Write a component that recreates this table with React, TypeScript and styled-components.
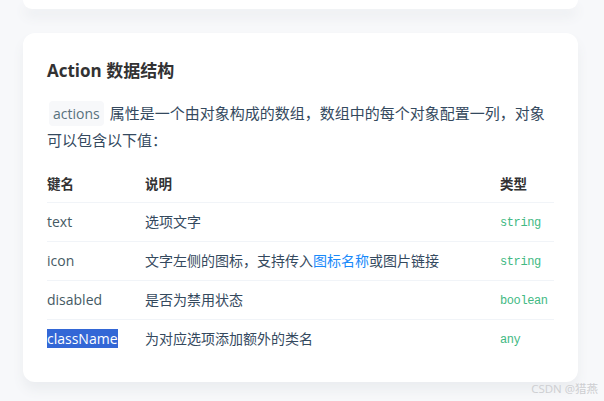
import React from "react";
import styled, { createGlobalStyle } from "styled-components";

const Global = createGlobalStyle`
  html, body { margin: 0; padding: 0; background: #f7f8fa; }
  body { font-family: "Open Sans", "Noto Sans CJK SC", sans-serif; color: #323233; }
`;

const Page = styled.div`
  width: 604px;
  height: 401px;
  overflow: hidden;
  background: #f7f8fa;
  display: flex;
  flex-direction: column;
  gap: 24px;
  padding: 0 26px 0 23px;
  box-sizing: border-box;
  position: relative;
`;

const Card = styled.div<{ $top?: boolean }>`
  background: #fff;
  border-radius: ${(p) => (p.$top ? "0 0 12px 12px" : "12px")};
  box-shadow: 0 8px 12px #ebedf0;
  flex-shrink: 0;
`;

const TopCard = styled(Card)`
  height: 9px;
`;

const DocCard = styled(Card)`
  padding: 23px 24px 24px 24px;
`;

const Title = styled.h3`
  margin: 0 0 14px;
  font-size: 17px;
  font-weight: 700;
  line-height: 30px;
  color: #323233;
  font-family: "Open Sans", "Noto Sans CJK SC", sans-serif;
`;

const Para = styled.p`
  margin: 0 0 19px;
  font-size: 15px;
  line-height: 27px;
  color: #34495e;
`;

const Code = styled.code`
  margin: 0 6px 0 2px;
  padding: 3px 4px;
  background: #f7f8fa;
  border-radius: 4px;
  color: #58727e;
  font-family: "Open Sans", sans-serif;
  font-size: 14px;
`;

const Table = styled.table`
  width: 100%;
  border-collapse: collapse;
  font-size: 14px;
  color: #34495e;
`;

const Th = styled.th<{ $w?: number }>`
  text-align: left;
  font-weight: 700;
  font-size: 13.5px;
  padding: 0 0 7px 0;
  vertical-align: top;
  line-height: 22px;
  width: ${(p) => (p.$w ? `${p.$w}px` : "auto")};
  color: #323233;
  border-bottom: 1px solid #f1f4f8;
`;

const Td = styled.td`
  height: 38px;
  padding: 0;
  vertical-align: middle;
  line-height: 20px;
`;

const Row = styled.tr<{ $last?: boolean }>`
  & > td {
    border-bottom: ${(p) => (p.$last ? "none" : "1px solid #f1f4f8")};
  }
`;

const Key = styled.span<{ $selected?: boolean }>`
  font-size: 14px;
  color: ${(p) => (p.$selected ? "#fff" : "#455a64")};
  background: ${(p) => (p.$selected ? "#3367d6" : "transparent")};
`;

const Type = styled.span`
  font-family: "Liberation Mono", "DejaVu Sans Mono", monospace;
  font-size: 12px;
  letter-spacing: -0.4px;
  color: #42b983;
`;

const Link = styled.span`
  color: #1989fa;
`;

const Watermark = styled.div`
  position: absolute;
  right: 6px;
  bottom: 5px;
  font-size: 11.5px;
  color: #cdced1;
  font-family: "Open Sans", "Noto Sans CJK SC", sans-serif;
`;

const rows = [
  { k: "text", d: <>选项文字</>, t: "string" },
  { k: "icon", d: <>文字左侧的图标，支持传入<Link>图标名称</Link>或图片链接</>, t: "string" },
  { k: "disabled", d: <>是否为禁用状态</>, t: "boolean" },
  { k: "className", d: <>为对应选项添加额外的类名</>, t: "any", sel: true },
];

export default function App() {
  return (
    <>
      <Global />
      <Page>
        <TopCard $top />
        <DocCard>
          <Title>Action 数据结构</Title>
          <Para>
            <Code>actions</Code>属性是一个由对象构成的数组，数组中的每个对象配置一列，对象可以包含以下值：
          </Para>
          <Table>
            <thead>
              <tr>
                <Th $w={98}>键名</Th>
                <Th>说明</Th>
                <Th $w={54}>类型</Th>
              </tr>
            </thead>
            <tbody>
              {rows.map((r, i) => (
                <Row key={r.k} $last={i === rows.length - 1}>
                  <Td>
                    <Key $selected={r.sel}>{r.k}</Key>
                  </Td>
                  <Td>{r.d}</Td>
                  <Td>
                    <Type>{r.t}</Type>
                  </Td>
                </Row>
              ))}
            </tbody>
          </Table>
        </DocCard>
        <Watermark>CSDN @猎燕</Watermark>
      </Page>
    </>
  );
}
